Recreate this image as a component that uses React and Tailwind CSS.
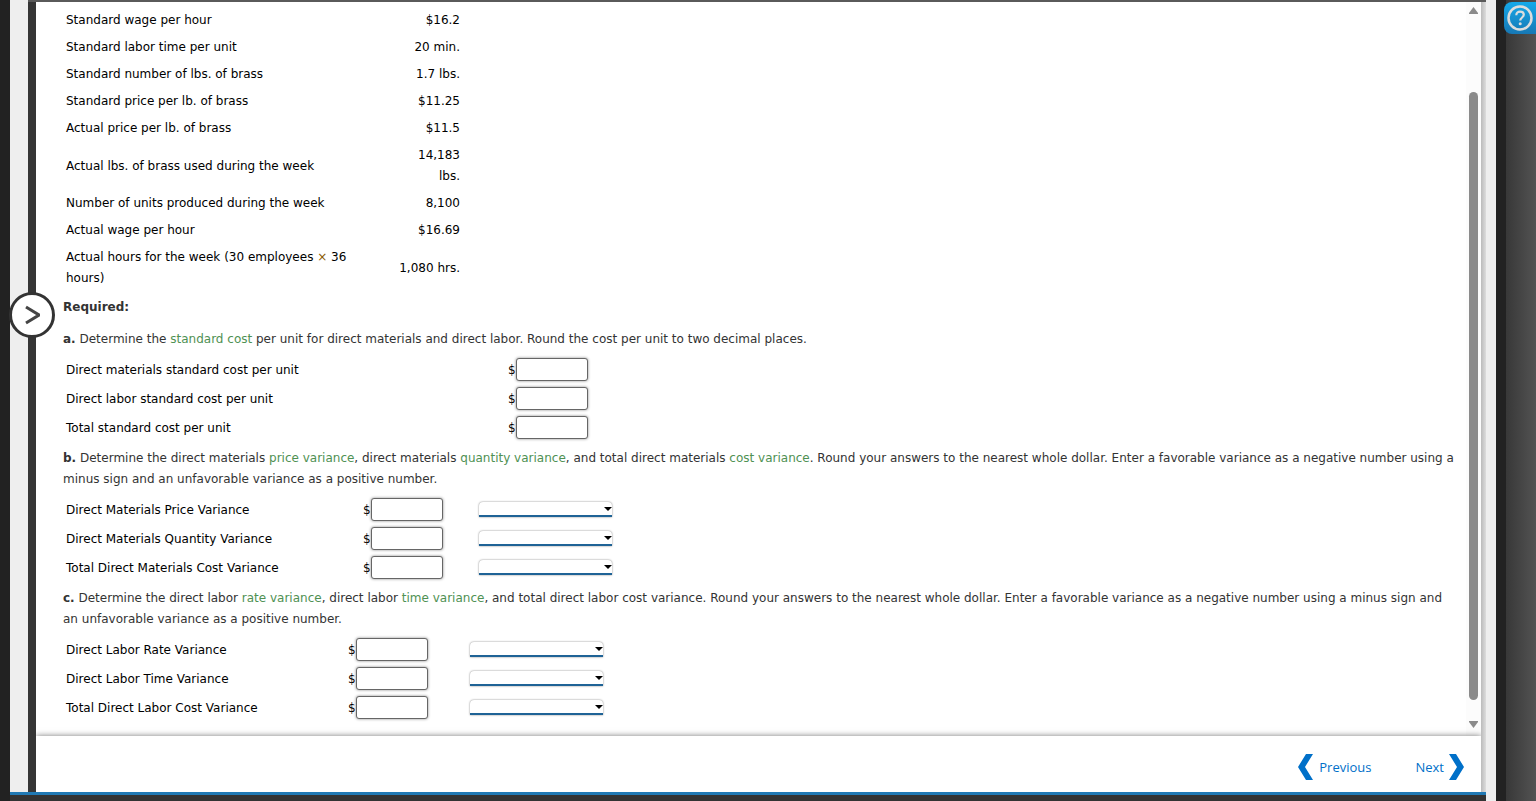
const facts = [
  ["Standard wage per hour", "$16.2"],
  ["Standard labor time per unit", "20 min."],
  ["Standard number of lbs. of brass", "1.7 lbs."],
  ["Standard price per lb. of brass", "$11.25"],
  ["Actual price per lb. of brass", "$11.5"],
  ["Actual lbs. of brass used during the week", "14,183 lbs."],
  ["Number of units produced during the week", "8,100"],
  ["Actual wage per hour", "$16.69"],
  [
    <>
      Actual hours for the week (30 employees <span className="text-[#8a5a00]">×</span> 36 hours)
    </>,
    "1,080 hrs.",
  ],
];

const standardCosts = [
  "Direct materials standard cost per unit",
  "Direct labor standard cost per unit",
  "Total standard cost per unit",
];

const materialVariances = [
  "Direct Materials Price Variance",
  "Direct Materials Quantity Variance",
  "Total Direct Materials Cost Variance",
];

const laborVariances = [
  "Direct Labor Rate Variance",
  "Direct Labor Time Variance",
  "Total Direct Labor Cost Variance",
];

function Term({ children }) {
  return (
    <a href="#" className="text-[#4f9153]">
      {children}
    </a>
  );
}

function AnswerTable({ id, rows, labelWidth, selectGap }) {
  return (
    <table className="border-collapse text-black">
      <tbody>
        {rows.map((label, i) => (
          <tr key={label} className="h-[29px]">
            <td className={`${labelWidth} px-[3px] pt-[2px]`}>
              <label htmlFor={`${id}-${i}`}>{label}</label>
            </td>
            <td>
              <div className="flex items-center">
                <span className="w-2 pt-[2px]">$</span>
                <input
                  id={`${id}-${i}`}
                  type="text"
                  className="h-[23px] w-[72px] rounded-[3px] border border-[#666] bg-white px-1 shadow-[0_0_3px_#888] outline-none"
                />
              </div>
            </td>
            {selectGap && (
              <td className={selectGap}>
                <div className="relative w-[133px]">
                  <select
                    aria-label={`${label} type`}
                    className="block h-[15px] w-full appearance-none rounded-t-[4px] border-b-2 border-[#1f6396] bg-white shadow-[0_0_2px_#777] outline-none"
                  >
                    <option></option>
                    <option>Favorable</option>
                    <option>Unfavorable</option>
                  </select>
                  <svg viewBox="0 0 8 4" className="pointer-events-none absolute top-[5px] right-0 h-1 w-2">
                    <path d="M0 0h8L4 4z" fill="#000" />
                  </svg>
                </div>
              </td>
            )}
          </tr>
        ))}
      </tbody>
    </table>
  );
}

function Scrollbar() {
  return (
    <div className="flex w-[15px] shrink-0 flex-col items-center bg-[#fcfcfc] pt-[5px] pb-2">
      <svg viewBox="0 0 9 7" className="h-[7px] w-[9px]">
        <path d="M4.500 0L9 6v1H0V6z" fill="#8b8b8b" />
      </svg>
      <div className="flex w-[9px] grow flex-col">
        <div className="grow-[78]" />
        <div className="grow-[608] rounded-full bg-[#8b8b8b]" />
        <div className="grow-[21]" />
      </div>
      <svg viewBox="0 0 9 7" className="h-[7px] w-[9px]">
        <path d="M0 0h9v1L4.500 7 0 1z" fill="#8b8b8b" />
      </svg>
    </div>
  );
}

function Question() {
  return (
    <main className="min-w-0 grow pt-[5px] pb-[14px] pl-[27px] pr-2">
      <table className="w-[400px] border-collapse text-black">
        <tbody>
          {facts.map(([label, value], i) => (
            <tr key={i}>
              <td className="py-[3px] pr-9 pl-[3px]">{label}</td>
              <td className="w-[72px] py-[3px] pr-[3px] pl-[5px] text-right">{value}</td>
            </tr>
          ))}
        </tbody>
      </table>
      <p className="mt-[5px] font-bold">Required:</p>
      <p className="mt-[11px] mb-[5px]">
        <b>a.</b> Determine the <Term>standard cost</Term> per unit for direct materials and direct labor. Round the
        cost per unit to two decimal places.
      </p>
      <AnswerTable id="cost" rows={standardCosts} labelWidth="w-[445px]" />
      <p className="mt-[6px] mb-[5px]">
        <b>b.</b> Determine the direct materials <Term>price variance</Term>, direct materials{" "}
        <Term>quantity variance</Term>, and total direct materials <Term>cost variance</Term>. Round your answers to
        the nearest whole dollar. Enter a favorable variance as a negative number using a minus sign and an
        unfavorable variance as a positive number.
      </p>
      <AnswerTable id="materials" rows={materialVariances} labelWidth="w-[300px]" selectGap="pl-[36px]" />
      <p className="mt-[6px] mb-[5px]">
        <b>c.</b> Determine the direct labor <Term>rate variance</Term>, direct labor <Term>time variance</Term>, and
        total direct labor cost variance. Round your answers to the nearest whole dollar. Enter a favorable variance
        as a negative number using a minus sign and an unfavorable variance as a positive number.
      </p>
      <AnswerTable id="labor" rows={laborVariances} labelWidth="w-[285px]" selectGap="pl-[42px]" />
    </main>
  );
}

function Footer() {
  return (
    <footer className="relative flex h-14 items-center justify-end gap-11 bg-white pr-[17px] pt-[6px] font-['Open_Sans','Noto_Sans',sans-serif] text-[13px] text-[#0070c9] shadow-[0_0_6px_#777]">
      <button type="button" className="flex items-center gap-[6px]">
        <svg viewBox="0 0 15 26" className="h-[26px] w-[15px]">
          <path d="M8 0h7L7 13l8 13H8L0 13z" fill="#0070c9" />
        </svg>
        Previous
      </button>
      <button type="button" className="flex items-center gap-[5px]">
        Next
        <svg viewBox="0 0 15 26" className="h-[26px] w-[15px]">
          <path d="M7 0H0l8 13-8 13h7l8-13z" fill="#0070c9" />
        </svg>
      </button>
    </footer>
  );
}

export default function App() {
  return (
    <div className="flex min-h-screen bg-[#222] font-['DejaVu_Sans',Verdana,sans-serif] text-xs/[21px] text-[#333]">
      <div className="w-[10px] shrink-0" />
      <div className="relative flex min-w-0 grow flex-col">
        <div className="flex grow">
          <div className="w-[18px] shrink-0 bg-[#eee]" />
          <div className="flex min-w-0 grow flex-col border-t-2 border-[#5a5a5a]">
            <div className="flex grow">
              <div className="w-2 shrink-0 bg-[#353535]" />
              <div className="flex min-w-0 grow flex-col overflow-hidden bg-white">
                <div className="flex grow">
                  <Question />
                  <Scrollbar />
                </div>
                <Footer />
              </div>
              <div className="w-[5px] shrink-0 bg-linear-to-r from-[#bbb] to-[#ddd]" />
            </div>
          </div>
        </div>
        <div className="h-[3px] bg-[#2079b4]" />
        <div className="h-[6px] bg-[#333]" />
        <button
          type="button"
          aria-label="Expand panel"
          className="absolute top-[292px] -left-px flex size-[46px] items-center justify-center rounded-full border-[3px] border-[#333] bg-white"
        >
          <svg viewBox="0 0 16 20" className="h-5 w-4">
            <path d="M2 2l13 8-13 8" fill="none" stroke="#444" strokeWidth="3" />
          </svg>
        </button>
      </div>
      <div className="w-[10px] shrink-0 bg-[#eee]" />
      <div className="w-[10px] shrink-0 bg-[#222]" />
      <div className="relative w-[30px] shrink-0 bg-linear-to-r from-[#383838] to-[#535353]">
        <button
          type="button"
          aria-label="Help"
          className="absolute top-[2px] right-0 flex size-8 items-center justify-center rounded-l-lg bg-linear-to-b from-[#15a9ea] to-[#1778b5]"
        >
          <svg viewBox="0 0 26 26" className="size-[26px]" fill="none" stroke="#ddd">
            <circle cx="13" cy="13" r="11.500" strokeWidth="2.500" />
            <path d="M9.300 10.200c0-2.300 1.600-3.600 3.800-3.600s3.700 1.300 3.700 3.200c0 2.600-3.600 2.800-3.600 5.700" strokeWidth="2.200" />
            <circle cx="13.200" cy="18.800" r="1.500" fill="#ddd" stroke="none" />
          </svg>
        </button>
      </div>
    </div>
  );
}
